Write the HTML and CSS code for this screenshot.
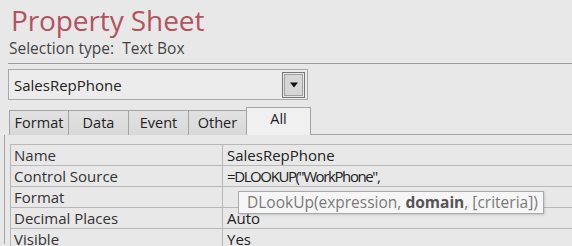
FILE: index.html
```html
<!DOCTYPE html>
<html>
<head>
<meta charset="utf-8">
<link rel="stylesheet" href="styles.css">
</head>
<body>
<div class="sheet">
  <h1 class="title">Property Sheet</h1>
  <div class="seltype">Selection type:&nbsp; Text Box</div>
  <div class="rule"></div>
  <div class="combo">
    <span class="combo-text">SalesRepPhone</span>
    <span class="combo-btn"><svg width="10" height="6" viewBox="0 0 10 6"><path d="M1 0.5 L9 0.5 L5 5.5 Z" fill="#111"/></svg></span>
  </div>
  <div class="tabs">
    <div class="tab t-format">Format</div>
    <div class="tab t-data">Data</div>
    <div class="tab t-event">Event</div>
    <div class="tab t-other">Other</div>
    <div class="tab active">All</div>
    <div class="tab-fill"></div>
  </div>
  <div class="panel">
    <div class="grid">
      <div class="row"><div class="lbl">Name</div><div class="val">SalesRepPhone</div></div>
      <div class="row"><div class="lbl">Control Source</div><div class="val val-expr">=DLOOKUP("WorkPhone",</div></div>
      <div class="row"><div class="lbl">Format</div><div class="val"></div></div>
      <div class="row"><div class="lbl">Decimal Places</div><div class="val">Auto</div></div>
      <div class="row"><div class="lbl">Visible</div><div class="val">Yes</div></div>
    </div>
    <div class="tooltip">DLookUp(expression, <b>domain</b>, [criteria])</div>
  </div>
</div>
</body>
</html>
```

FILE: styles.css
```css
html, body {
  margin: 0;
  padding: 0;
  background: #e8e8e8;
  width: 572px;
  height: 246px;
  overflow: hidden;
}
.sheet {
  font-family: "Open Sans", "Noto Sans", sans-serif;
  color: #333;
}
.title {
  margin: 0;
  padding: 3px 0 0 11px;
  height: 34px;
  font-weight: 400;
  font-size: 28px;
  line-height: 34px;
  color: #b3535e;
  letter-spacing: -0.1px;
}
.seltype {
  padding-left: 9px;
  height: 22px;
  line-height: 22px;
  font-size: 15.5px;
  color: #444;
}
.rule {
  margin-left: 8px;
  height: 0;
  border-top: 1px solid #9a9a9a;
  margin-top: 4px;
}
.combo {
  margin: 5px 0 0 8px;
  width: 300px;
  height: 31px;
  box-sizing: border-box;
  border: 1px solid #a8a8a8;
  background: #ececec;
  display: flex;
  align-items: center;
  justify-content: space-between;
  padding: 0 2px 0 5px;
}
.combo-text {
  font-size: 15px;
  color: #222;
}
.combo-btn {
  width: 23px;
  height: 26px;
  box-sizing: border-box;
  border: 1px solid #777;
  box-shadow: inset 0 0 0 1px #e8e8e8, inset 0 0 0 2px #a0a0a0;
  background: #d6d6d6;
  display: flex;
  align-items: center;
  justify-content: center;
}
.tabs {
  margin-top: 7px;
  height: 28px;
  display: flex;
  align-items: flex-end;
  padding-left: 9px;
}
.tab {
  height: 25px;
  box-sizing: border-box;
  border: 1px solid #a4a4a4;
  border-bottom: none;
  background: linear-gradient(#e2e2e2, #d8d8d8);
  font-size: 14.5px;
  line-height: 24px;
  text-align: center;
  color: #222;
  margin-right: -1px;
}
.t-format { width: 60px; }
.t-data { width: 61px; }
.t-event { width: 61px; }
.t-other { width: 59px; }
.tab.active {
  height: 28px;
  width: 65px;
  background: #f0f0f0;
  line-height: 22px;
  margin-right: 0;
}
.tab-fill {
  flex: 1;
  height: 0;
  border-bottom: 1px solid #a4a4a4;
}
.panel {
  position: relative;
  margin-left: 4px;
  border-left: 1px solid #a4a4a4;
  padding: 9px 0 0 5px;
  height: 100px;
}
.grid {
  border-top: 1px solid #b8b8b8;
  border-left: 1px solid #b8b8b8;
}
.row {
  display: flex;
  height: 21px;
  box-sizing: border-box;
  border-bottom: 1px solid #b8b8b8;
  font-size: 15px;
  line-height: 20px;
}
.lbl {
  width: 212px;
  padding-left: 3px;
  box-sizing: border-box;
  border-right: 1px solid #b8b8b8;
  color: #333;
}
.val {
  flex: 1;
  padding-left: 4px;
  color: #222;
}
.val-expr {
  letter-spacing: -1.4px;
}
.tooltip {
  position: absolute;
  left: 233px;
  top: 56px;
  width: 306px;
  height: 23px;
  box-sizing: border-box;
  border: 1px solid #a8a8a8;
  background: #f6f6f6;
  box-shadow: 1px 1px 2px rgba(0,0,0,0.15);
  font-size: 15.5px;
  line-height: 21px;
  padding-left: 8px;
  color: #7a7a7a;
  white-space: nowrap;
}
.tooltip b {
  color: #555;
  font-weight: 700;
}
```
